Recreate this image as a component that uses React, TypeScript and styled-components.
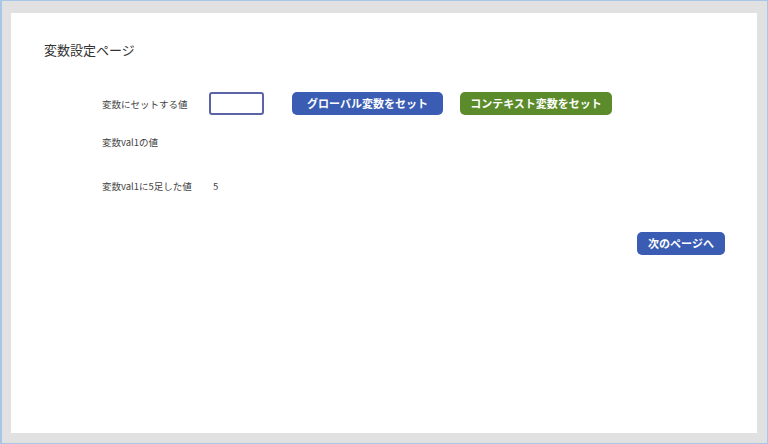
import React from "react";
import styled, { createGlobalStyle } from "styled-components";

const Global = createGlobalStyle`
  html, body { margin: 0; padding: 0; }
  body { font-family: "Noto Sans CJK JP", "Noto Sans", sans-serif; }
`;

const Frame = styled.div`
  box-sizing: border-box;
  width: 768px;
  height: 444px;
  background: #e1e1e1;
  border: 1px solid #a8c6e6;
  border-left-width: 2px;
  padding: 12px 10px 10px 9px;
  display: flex;
`;

const Canvas = styled.div`
  flex: 1;
  background: #ffffff;
  position: relative;
  display: flex;
  flex-direction: column;
  padding: 28px 0 0 33px;
  box-sizing: border-box;
`;

const Title = styled.h1`
  margin: 0;
  font-size: 13px;
  font-weight: 400;
  line-height: 18px;
  color: #333333;
`;

const Form = styled.div`
  display: flex;
  flex-direction: column;
  margin: 33px 0 0 58px;
`;

const Row = styled.div<{ $mt?: number; $h?: number }>`
  display: grid;
  grid-template-columns: 107px 55px 28px 151px 17px 152px;
  align-items: center;
  height: ${(p) => p.$h ?? 22}px;
  margin-top: ${(p) => p.$mt ?? 0}px;
`;

const Label = styled.span`
  font-size: 9.5px;
  color: #444444;
  white-space: nowrap;
`;

const Value = styled.span`
  font-size: 9.5px;
  color: #444444;
  padding-left: 4px;
`;

const Input = styled.input`
  box-sizing: border-box;
  width: 55px;
  height: 23px;
  border: 2px solid #5c64a8;
  border-radius: 3px;
  background: #fff;
  padding: 0 4px;
  outline: none;
`;

const Button = styled.button<{ $color: string; $w?: number }>`
  box-sizing: border-box;
  height: 23px;
  ${(p) => (p.$w ? `width: ${p.$w}px;` : "")}
  border: none;
  border-radius: 5px;
  background: ${(p) => p.$color};
  color: #ffffff;
  font-family: "Noto Sans CJK JP", "Noto Sans", sans-serif;
  font-weight: 700;
  font-size: 11px;
  line-height: 23px;
  padding: 0;
  white-space: nowrap;
  cursor: pointer;
`;

const Footer = styled.div`
  display: flex;
  justify-content: flex-end;
  margin: 35px 32px 0 0;
`;

const BLUE = "#3a5db3";
const GREEN = "#5b8b2a";

export default function App() {
  return (
    <>
      <Global />
      <Frame>
        <Canvas>
          <Title>変数設定ページ</Title>
          <Form>
            <Row>
              <Label>変数にセットする値</Label>
              <Input type="text" />
              <span />
              <Button $color={BLUE}>グローバル変数をセット</Button>
              <span />
              <Button $color={GREEN}>コンテキスト変数をセット</Button>
            </Row>
            <Row $mt={17} $h={22}>
              <Label>変数val1の値</Label>
              <Value></Value>
            </Row>
            <Row $mt={22} $h={22}>
              <Label>変数val1に5足した値</Label>
              <Value>5</Value>
            </Row>
          </Form>
          <Footer>
            <Button $color={BLUE} $w={88}>次のページへ</Button>
          </Footer>
        </Canvas>
      </Frame>
    </>
  );
}
